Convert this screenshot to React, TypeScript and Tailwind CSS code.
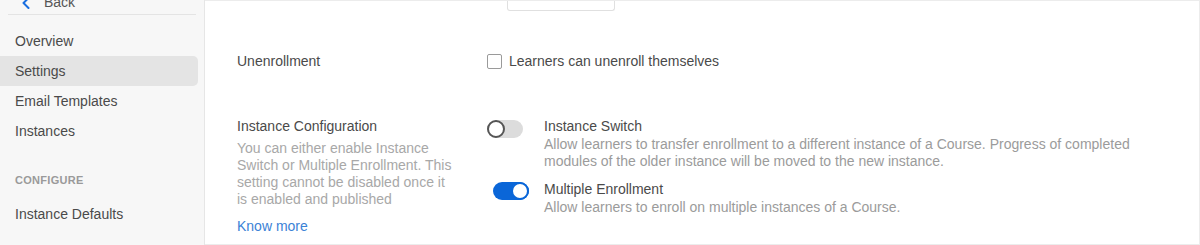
import React from "react";

const NAV = ["Overview", "Settings", "Email Templates", "Instances"];

function Toggle({ on }: { on: boolean }) {
  return on ? (
    <div className="flex h-[18px] w-[36px] items-center justify-end rounded-full bg-[#0a66d8]">
      <div className="h-[18px] w-[18px] rounded-full border-2 border-[#0a66d8] bg-white" />
    </div>
  ) : (
    <div className="flex h-[18px] w-[36px] items-center rounded-full bg-[#dcdcdc]">
      <div className="h-[18px] w-[18px] rounded-full border-2 border-[#555] bg-white" />
    </div>
  );
}

export default function App() {
  return (
    <div
      className="flex h-[245px] w-[1200px] overflow-hidden bg-white text-[#444]"
      style={{ fontFamily: '"Liberation Sans", Arial, sans-serif' }}
    >
      {/* Sidebar */}
      <aside className="w-[205px] shrink-0 border-r border-[#e6e6e6] bg-[#f7f7f7]">
        <div className="mx-[8px] mt-[-9px] flex h-[24px] items-center gap-[14px] border-b border-[#e4e4e4] pl-[14px]">
          <svg width="8" height="12" viewBox="0 0 8 12" fill="none">
            <path d="M6.5 1 L1.5 6 L6.5 11" stroke="#1a6fe0" strokeWidth="2" strokeLinecap="round" strokeLinejoin="round" />
          </svg>
          <span className="text-[14px] text-[#555]">Back</span>
        </div>
        <nav className="mt-[11px]">
          {NAV.map((n) => (
            <div
              key={n}
              className={
                "mr-[6px] flex h-[30px] items-center rounded-r-[5px] pl-[15px] text-[14px] text-[#4a4a4a] " +
                (n === "Settings" ? "bg-[#e4e4e4]" : "")
              }
            >
              {n}
            </div>
          ))}
        </nav>
        <div className="mt-[26px] pl-[15px] text-[11px] font-bold tracking-[0.3px] text-[#9a9a9a]">CONFIGURE</div>
        <div className="mt-[15px] pl-[15px] text-[14px] text-[#4a4a4a]">Instance Defaults</div>
      </aside>

      {/* Main */}
      <main className="flex-1 border-b border-r border-t border-[#ececec] pl-[32px]">
        <div className="ml-[270px] h-[10px] w-[108px] rounded-b-[3px] border border-t-0 border-[#e0e0e0]" />

        <div className="mt-[40px] flex h-[20px] items-center">
          <div className="w-[250px] text-[14px] text-[#4a4a4a]">Unenrollment</div>
          <div className="flex items-center gap-[7px]">
            <div className="h-[15px] w-[15px] rounded-[2px] border border-[#9a9a9a] bg-white" />
            <span className="text-[14px] text-[#4a4a4a]">Learners can unenroll themselves</span>
          </div>
        </div>

        <div className="mt-[45px] flex">
          <div className="w-[250px]">
            <div className="text-[14px] leading-[20px] text-[#4a4a4a]">Instance Configuration</div>
            <p className="mt-[4px] w-[216px] text-[14px] leading-[17px] text-[#a8a8a8]">
              You can either enable Instance Switch or Multiple Enrollment. This setting cannot be disabled once it
              is enabled and published
            </p>
            <div className="mt-[9px] text-[14px] leading-[18px] text-[#3b82d6]">Know more</div>
          </div>

          <div className="flex-1">
            <div className="flex">
              <div className="w-[57px] pt-[4px]">
                <Toggle on={false} />
              </div>
              <div>
                <div className="text-[14px] leading-[20px] text-[#4a4a4a]">Instance Switch</div>
                <p className="w-[610px] text-[14px] leading-[17px] text-[#9b9b9b]">
                  Allow learners to transfer enrollment to a different instance of a Course. Progress of completed
                  modules of the older instance will be moved to the new instance.
                </p>
              </div>
            </div>
            <div className="mt-[9px] flex">
              <div className="w-[57px] pl-[6px] pt-[3px]">
                <Toggle on={true} />
              </div>
              <div>
                <div className="text-[14px] leading-[20px] text-[#4a4a4a]">Multiple Enrollment</div>
                <p className="text-[14px] leading-[17px] text-[#9b9b9b]">
                  Allow learners to enroll on multiple instances of a Course.
                </p>
              </div>
            </div>
          </div>
        </div>
      </main>
    </div>
  );
}
